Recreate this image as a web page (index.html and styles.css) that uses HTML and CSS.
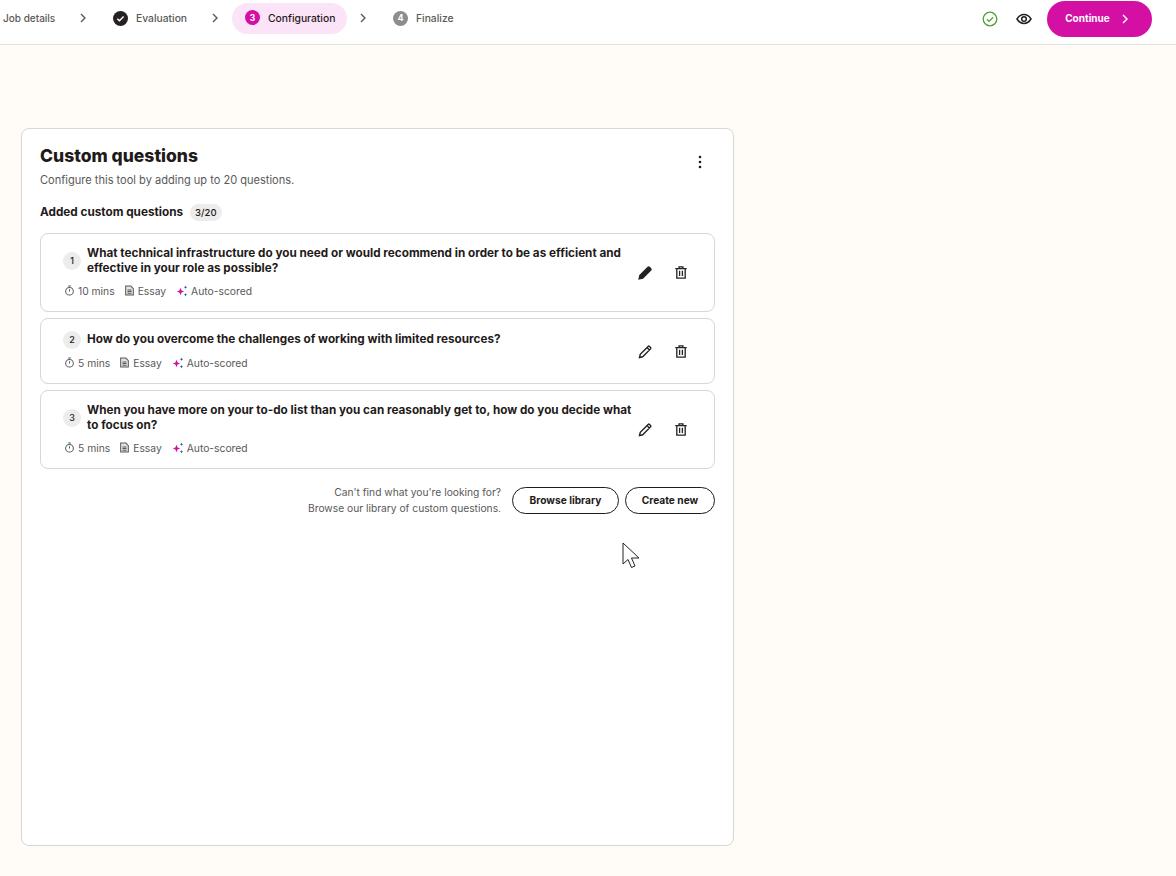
FILE: index.html
```html
<!DOCTYPE html>
<html lang="en">
<head>
<meta charset="utf-8">
<title>Custom questions</title>
<link rel="stylesheet" href="styles.css">
</head>
<body>
<header class="topbar">
  <nav class="steps">
    <span class="step step-first">Job details</span>
    <svg class="chev" viewBox="0 0 8 12"><path d="M2 2l4 4-4 4"/></svg>
    <span class="step step-eval"><span class="num num-dark"><svg viewBox="0 0 16 16"><path d="M4.600 8.300l2.300 2.200 4.400-4.600"/></svg></span>Evaluation</span>
    <svg class="chev" viewBox="0 0 8 12"><path d="M2 2l4 4-4 4"/></svg>
    <span class="step step-active"><span class="num num-pink">3</span>Configuration</span>
    <svg class="chev" viewBox="0 0 8 12"><path d="M2 2l4 4-4 4"/></svg>
    <span class="step step-last"><span class="num num-grey">4</span>Finalize</span>
  </nav>
  <div class="actions">
    <svg class="ok" viewBox="0 0 16 16"><circle cx="8" cy="8" r="6.800"/><path d="M4.900 8.200l2.200 2.200 4-4.200"/></svg>
    <svg class="eye" viewBox="0 0 16 16"><path d="M1 8c1.800-3 4-4.400 7-4.400S13.200 5 15 8c-1.800 3-4 4.400-7 4.400S2.800 11 1 8z"/><circle cx="8" cy="8" r="2.300"/></svg>
    <button class="continue">Continue<svg viewBox="0 0 8 12"><path d="M2 2l4 4-4 4"/></svg></button>
  </div>
</header>
<main class="page">
  <section class="card">
    <div class="card-head">
      <div>
        <h1>Custom questions</h1>
        <p class="sub">Configure this tool by adding up to 20 questions.</p>
      </div>
      <svg class="more" viewBox="0 0 4 14"><circle cx="2" cy="2" r="1.300"/><circle cx="2" cy="7" r="1.300"/><circle cx="2" cy="12" r="1.300"/></svg>
    </div>
    <div class="added"><h2>Added custom questions</h2><span class="count">3/20</span></div>
    <ul class="questions">
      <li class="q q-tall">
        <span class="qnum">1</span>
        <div class="qbody">
          <h3>What technical infrastructure do you need or would recommend in order to be as efficient and effective in your role as possible?</h3>
          <div class="meta">
            <span class="m"><svg class="ic" viewBox="0 0 12 12"><circle cx="6" cy="6.800" r="4.200"/><path d="M4.500 1h3M6 4.500v2.500"/></svg>10 mins</span>
            <span class="m"><svg class="ic" viewBox="0 0 12 12"><path class="doc" d="M1.800 1.200h5.700L10.200 4v6.800H1.800z"/><path d="M3.800 5.500h4.400M3.800 7.200h4.400M3.800 8.900h4.400"/></svg>Essay</span>
            <span class="m"><svg class="ic spark" viewBox="0 0 12 12"><path class="p" d="M4.500 2.800l1.100 2.600 2.600 1.100-2.600 1.100-1.100 2.600-1.100-2.600L.8 6.500l2.600-1.100z"/><path class="b" d="M9.500.5l.5 1.300 1.300.5-1.300.5-.5 1.300-.5-1.300-1.300-.5L9 1.800zM9.500 8l.5 1.300 1.300.5-1.300.5-.5 1.300-.5-1.300-1.300-.5L9 9.300z"/></svg>Auto-scored</span>
          </div>
        </div>
        <div class="tools">
          <svg class="pen" viewBox="0 0 16 16"><path class="solid" d="M1.200 14.800l.9-3.800 8.600-8.600a1 1 0 0 1 1.400 0l1.500 1.500a1 1 0 0 1 0 1.400L5 14z"/></svg>
          <svg class="bin" viewBox="0 0 16 16"><path d="M1.500 3.500h13M5.800 3.300V1.500h4.400v1.800M3.200 3.500v11h9.600v-11M6.400 6v6M9.600 6v6"/></svg>
        </div>
      </li>
      <li class="q q-short">
        <span class="qnum">2</span>
        <div class="qbody">
          <h3>How do you overcome the challenges of working with limited resources?</h3>
          <div class="meta">
            <span class="m"><svg class="ic" viewBox="0 0 12 12"><circle cx="6" cy="6.800" r="4.200"/><path d="M4.500 1h3M6 4.500v2.500"/></svg>5 mins</span>
            <span class="m"><svg class="ic" viewBox="0 0 12 12"><path class="doc" d="M1.800 1.200h5.700L10.200 4v6.800H1.800z"/><path d="M3.800 5.500h4.400M3.800 7.200h4.400M3.800 8.900h4.400"/></svg>Essay</span>
            <span class="m"><svg class="ic spark" viewBox="0 0 12 12"><path class="p" d="M4.500 2.800l1.100 2.600 2.600 1.100-2.600 1.100-1.100 2.600-1.100-2.600L.8 6.500l2.600-1.100z"/><path class="b" d="M9.500.5l.5 1.300 1.300.5-1.300.5-.5 1.300-.5-1.300-1.300-.5L9 1.800zM9.500 8l.5 1.300 1.300.5-1.300.5-.5 1.300-.5-1.300-1.300-.5L9 9.300z"/></svg>Auto-scored</span>
          </div>
        </div>
        <div class="tools">
          <svg class="pen" viewBox="0 0 16 16"><path d="M1.600 14.400l.8-3.400 8.400-8.400a1 1 0 0 1 1.400 0l1.200 1.200a1 1 0 0 1 0 1.400L5 13.600zM9.600 3.800l2.600 2.600"/></svg>
          <svg class="bin" viewBox="0 0 16 16"><path d="M1.500 3.500h13M5.800 3.300V1.500h4.400v1.800M3.200 3.500v11h9.600v-11M6.400 6v6M9.600 6v6"/></svg>
        </div>
      </li>
      <li class="q q-tall">
        <span class="qnum">3</span>
        <div class="qbody">
          <h3>When you have more on your to-do list than you can reasonably get to, how do you decide what to focus on?</h3>
          <div class="meta">
            <span class="m"><svg class="ic" viewBox="0 0 12 12"><circle cx="6" cy="6.800" r="4.200"/><path d="M4.500 1h3M6 4.500v2.500"/></svg>5 mins</span>
            <span class="m"><svg class="ic" viewBox="0 0 12 12"><path class="doc" d="M1.800 1.200h5.700L10.200 4v6.800H1.800z"/><path d="M3.800 5.500h4.400M3.800 7.200h4.400M3.800 8.900h4.400"/></svg>Essay</span>
            <span class="m"><svg class="ic spark" viewBox="0 0 12 12"><path class="p" d="M4.500 2.800l1.100 2.600 2.600 1.100-2.600 1.100-1.100 2.600-1.100-2.600L.8 6.500l2.600-1.100z"/><path class="b" d="M9.500.5l.5 1.300 1.300.5-1.300.5-.5 1.300-.5-1.300-1.300-.5L9 1.800zM9.500 8l.5 1.300 1.300.5-1.300.5-.5 1.300-.5-1.300-1.300-.5L9 9.300z"/></svg>Auto-scored</span>
          </div>
        </div>
        <div class="tools">
          <svg class="pen" viewBox="0 0 16 16"><path d="M1.600 14.400l.8-3.400 8.400-8.400a1 1 0 0 1 1.400 0l1.200 1.200a1 1 0 0 1 0 1.400L5 13.600zM9.600 3.800l2.600 2.600"/></svg>
          <svg class="bin" viewBox="0 0 16 16"><path d="M1.500 3.500h13M5.800 3.300V1.500h4.400v1.800M3.200 3.500v11h9.600v-11M6.400 6v6M9.600 6v6"/></svg>
        </div>
      </li>
    </ul>
    <div class="footer">
      <p class="hint">Can't find what you're looking for?<br>Browse our library of custom questions.</p>
      <button class="btn btn-browse">Browse library</button>
      <button class="btn btn-create">Create new</button>
    </div>
  </section>
</main>
<svg class="cursor" viewBox="0 0 20 28"><path d="M1 1v21l5-4.500 3.500 8 3.500-1.500-3.500-8H17z"/></svg>
</body>
</html>
```

FILE: styles.css
```css
* { box-sizing: border-box; }
html, body { margin: 0; padding: 0; }
body {
  width: 1176px;
  height: 876px;
  overflow: hidden;
  position: relative;
  background: #fffbf6;
  font-family: Inter, "Liberation Sans", sans-serif;
  color: #1f1b1a;
}
.topbar {
  height: 45px;
  background: #fff;
  border-bottom: 1px solid #e4e2e0;
  display: flex;
  align-items: flex-start;
  justify-content: space-between;
  padding: 0 24px 0 3px;
}
.steps { display: flex; align-items: center; height: 36px; }
.step {
  display: flex;
  align-items: center;
  gap: 8px;
  font-size: 10.300px;
  font-weight: 500;
  color: #595959;
  white-space: nowrap;
}
.step-first { width: 76px; font-size: 10px; }
.step-eval { width: 78px; margin: 0 20px 0 26px; }
.step-active {
  height: 31px;
  width: 115px;
  padding: 0 12px 2px 13px;
  margin: 1px 12px 0 13px;
  border-radius: 16px;
  background: #fce4f8;
  color: #1f1b1a;
}
.step-last { margin-left: 26px; }
.chev { width: 8px; height: 12px; flex: none; fill: none; stroke: #595959; stroke-width: 1.400; }
.num {
  width: 15px;
  height: 15px;
  border-radius: 50%;
  flex: none;
  display: flex;
  align-items: center;
  justify-content: center;
  color: #fff;
  font-size: 8.500px;
  font-weight: 700;
}
.num svg { width: 15px; height: 15px; fill: none; stroke: #fff; stroke-width: 1.500; }
.num-dark { background: #262221; }
.num-pink { background: #d40fa4; }
.num-grey { background: #8f8d8c; }
.actions { display: flex; align-items: center; height: 38px; }
.ok { width: 16px; height: 16px; fill: none; stroke: #4f9e32; stroke-width: 1.300; margin-right: 18px; }
.eye { width: 16px; height: 16px; fill: none; stroke: #222; stroke-width: 1.500; margin-right: 15px; }
.continue {
  width: 105px;
  height: 36px;
  border: 0;
  border-radius: 18px;
  background: #d40fa4;
  color: #fff;
  font: 700 10px Inter, "Liberation Sans", sans-serif;
  display: flex;
  align-items: center;
  justify-content: center;
  gap: 11px;
  padding: 0 5px 2px 0;
}
.continue svg { width: 8px; height: 12px; fill: none; stroke: #fff; stroke-width: 1.400; margin-top: 2px; }
.page { padding: 83px 0 0 21px; }
.card {
  width: 713px;
  height: 718px;
  background: #fff;
  border: 1px solid #d9d6d3;
  border-radius: 8px;
  padding: 16px 18px;
}
.card-head { display: flex; justify-content: space-between; height: 46px; }
h1 { margin: 0; font-size: 17.500px; line-height: 22px; font-weight: 800; }
.sub { margin: 5px 0 0; font-size: 11.050px; line-height: 16px; color: #595959; }
.more { width: 4px; height: 14px; fill: #1f1b1a; margin: 10px 13px 0 0; }
.added { display: flex; align-items: center; gap: 7px; margin-top: 12px; height: 18px; }
h2 { margin: 0; font-size: 11.750px; font-weight: 700; }
.count {
  background: #ececec;
  border-radius: 9px;
  height: 17px;
  padding: 0 5px;
  font-size: 9.500px;
  font-weight: 500;
  line-height: 17px;
}
.questions { list-style: none; margin: 12px 0 0; padding: 0; display: flex; flex-direction: column; gap: 6px; }
.q {
  width: 675px;
  border: 1px solid #d9d6d3;
  border-radius: 8px;
  display: flex;
  align-items: flex-start;
  padding-left: 22px;
  position: relative;
}
.q-tall { height: 79px; padding-top: 12px; }
.q-short { height: 66px; padding-top: 13px; }
.qnum {
  width: 18px;
  height: 18px;
  border-radius: 50%;
  background: #ececec;
  flex: none;
  font-size: 9px;
  font-weight: 500;
  text-align: center;
  line-height: 18px;
  margin: 6px 6px 0 0;
}
.q-short .qnum { margin-top: -1px; }
.qbody { width: 546px; }
h3 { margin: 0; font-size: 11.720px; line-height: 15px; font-weight: 700; }
.meta { display: flex; gap: 9px; margin-top: 7px; margin-left: -23px; height: 15px; align-items: center; }
.q-short .meta { margin-top: 8px; }
.m { display: flex; align-items: center; gap: 3px; font-size: 10.300px; color: #595959; white-space: nowrap; }
.ic { width: 11px; height: 11px; fill: none; stroke: #595959; stroke-width: 1.100; }
.doc { fill: #e4e2e0; }
.spark { width: 12px; height: 12px; stroke: none; margin-left: 1px; margin-right: 0; }
.spark .p { fill: #d40fa4; }
.spark .b { fill: #2557a7; }
.tools {
  position: absolute;
  right: 26px;
  top: 0;
  bottom: 0;
  display: flex;
  align-items: center;
  gap: 21px;
}
.pen { width: 15px; height: 15px; fill: none; stroke: #222; stroke-width: 1.500; }
.pen .solid { fill: #222; }
.bin { width: 14px; height: 15px; fill: none; stroke: #222; stroke-width: 1.500; }
.footer { display: flex; align-items: flex-start; justify-content: flex-end; margin-top: 15px; width: 675px; }
.hint { margin: 0 11px 0 0; font-size: 10.250px; line-height: 16px; color: #595959; text-align: right; }
.btn {
  height: 27px;
  margin-top: 3px;
  border: 1px solid #1f1b1a;
  border-radius: 14px;
  background: #fff;
  color: #1f1b1a;
  font: 700 10.200px Inter, "Liberation Sans", sans-serif;
  padding: 0 0 2px;
}
.btn-browse { width: 107px; margin-right: 6px; }
.btn-create { width: 90px; }
.cursor {
  position: absolute;
  left: 622px;
  top: 542px;
  width: 20px;
  height: 28px;
  fill: #fff;
  stroke: #222;
  stroke-width: 1;
}
```
